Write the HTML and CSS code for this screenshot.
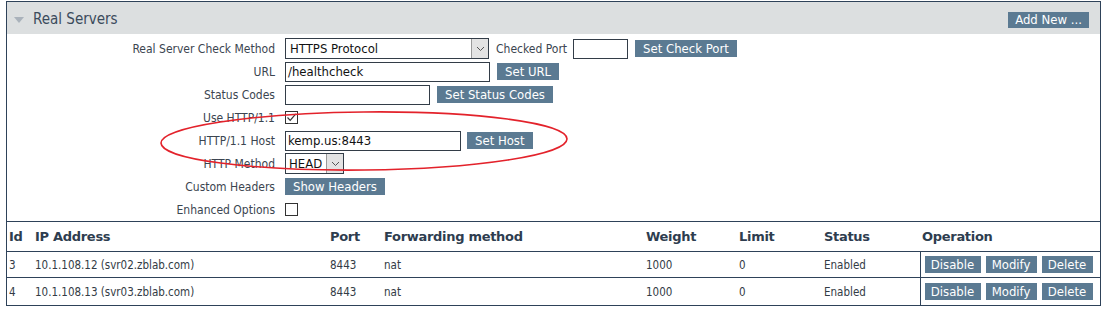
FILE: index.html
```html
<!DOCTYPE html>
<html>
<head>
<meta charset="utf-8">
<link rel="stylesheet" href="styles.css">
</head>
<body>
<div class="panel">
  <div class="panel-head">
    <div class="title"><span class="tri"></span>Real Servers</div>
    <span class="btn">Add New ...</span>
  </div>
  <div class="form">
    <div class="row">
      <div class="lbl">Real Server Check Method</div>
      <div class="ctl">
        <div class="select w-method"><span class="sel-text">HTTPS Protocol</span><span class="arrow"><svg width="9" height="6" viewBox="0 0 9 6"><path d="M1 1 L4.5 4.5 L8 1" fill="none" stroke="#555" stroke-width="1"/></svg></span></div>
        <span class="inline-lbl">Checked Port</span>
        <span class="input w-port"></span>
        <span class="btn">Set Check Port</span>
      </div>
    </div>
    <div class="row">
      <div class="lbl">URL</div>
      <div class="ctl">
        <span class="input w-url">/healthcheck</span>
        <span class="btn">Set URL</span>
      </div>
    </div>
    <div class="row">
      <div class="lbl">Status Codes</div>
      <div class="ctl">
        <span class="input w-codes"></span>
        <span class="btn">Set Status Codes</span>
      </div>
    </div>
    <div class="row">
      <div class="lbl">Use HTTP/1.1</div>
      <div class="ctl">
        <span class="check"><svg width="11" height="11" viewBox="0 0 11 11"><path d="M1.5 5.5 L4.2 8.3 L9.8 1.8" fill="none" stroke="#333" stroke-width="1.2"/></svg></span>
      </div>
    </div>
    <div class="row">
      <div class="lbl">HTTP/1.1 Host</div>
      <div class="ctl">
        <span class="input w-host">kemp.us:8443</span>
        <span class="btn">Set Host</span>
      </div>
    </div>
    <div class="row">
      <div class="lbl">HTTP Method</div>
      <div class="ctl">
        <div class="select w-http"><span class="sel-text">HEAD</span><span class="arrow"><svg width="9" height="6" viewBox="0 0 9 6"><path d="M1 1 L4.5 4.5 L8 1" fill="none" stroke="#555" stroke-width="1"/></svg></span></div>
      </div>
    </div>
    <div class="row">
      <div class="lbl">Custom Headers</div>
      <div class="ctl">
        <span class="btn">Show Headers</span>
      </div>
    </div>
    <div class="row">
      <div class="lbl">Enhanced Options</div>
      <div class="ctl">
        <span class="check"></span>
      </div>
    </div>
    <svg class="ellipse" width="420" height="70" viewBox="0 0 420 70"><ellipse cx="210" cy="35" rx="203" ry="29" fill="none" stroke="#e3222b" stroke-width="1.6" transform="rotate(-0.6 210 35)"/></svg>
  </div>
  <table class="servers">
    <thead>
      <tr>
        <th class="c-id">Id</th>
        <th class="c-ip">IP Address</th>
        <th class="c-port">Port</th>
        <th class="c-fwd">Forwarding method</th>
        <th class="c-wt">Weight</th>
        <th class="c-lim">Limit</th>
        <th class="c-st">Status</th>
        <th class="c-op">Operation</th>
      </tr>
    </thead>
    <tbody>
      <tr>
        <td>3</td>
        <td>10.1.108.12 (svr02.zblab.com)</td>
        <td>8443</td>
        <td>nat</td>
        <td>1000</td>
        <td>0</td>
        <td>Enabled</td>
        <td class="ops"><span class="btn">Disable</span><span class="btn">Modify</span><span class="btn">Delete</span></td>
      </tr>
      <tr>
        <td>4</td>
        <td>10.1.108.13 (svr03.zblab.com)</td>
        <td>8443</td>
        <td>nat</td>
        <td>1000</td>
        <td>0</td>
        <td>Enabled</td>
        <td class="ops"><span class="btn">Disable</span><span class="btn">Modify</span><span class="btn">Delete</span></td>
      </tr>
    </tbody>
  </table>
</div>
</body>
</html>
```
FILE: styles.css
```css
html, body {
  margin: 0;
  padding: 0;
  background: #ffffff;
}
body {
  font-family: "DejaVu Sans Condensed", "DejaVu Sans", sans-serif;
  font-size: 12px;
  color: #333b45;
}
.panel {
  margin: 1px 0 0 6px;
  width: 1093px;
  border: 1px solid #2e4259;
  background: #fff;
}
.panel-head {
  height: 32px;
  background: #dcdfe0;
  display: flex;
  align-items: center;
  justify-content: space-between;
  padding: 0 11px 0 5px;
}
.title {
  display: flex;
  align-items: center;
  font-size: 15px;
  color: #3b4b5c;
  margin-top: 2px;
}
.tri {
  width: 0;
  height: 0;
  border-left: 5px solid transparent;
  border-right: 5px solid transparent;
  border-top: 6px solid #aab2bb;
  margin: 1px 9px 0 2px;
}
.panel-head .btn {
  margin-top: 3px;
  height: 16px;
  padding: 0 8px;
  width: 81px;
}
.btn {
  display: inline-flex;
  align-items: center;
  justify-content: center;
  background: #5b7a92;
  color: #ffffff;
  font-size: 13px;
  height: 17px;
  padding: 0 8px;
  box-sizing: border-box;
  white-space: nowrap;
}
.form {
  position: relative;
  padding-top: 3px;
  border-bottom: 1px solid #2e4259;
}
.row {
  display: flex;
  align-items: center;
  height: 23px;
}
.lbl {
  width: 268px;
  text-align: right;
  flex: none;
  padding-right: 10px;
  color: #3b4550;
}
.ctl {
  display: flex;
  align-items: center;
}
.input {
  display: inline-flex;
  align-items: center;
  height: 20px;
  box-sizing: border-box;
  border: 1px solid #333d48;
  padding: 0 2px;
  font-size: 13px;
  color: #111;
  background: #fff;
}
.w-url { width: 205px; margin-right: 7px; }
.w-codes { width: 145px; margin-right: 7px; }
.w-host { width: 176px; margin-right: 6px; }
.w-port { width: 55px; margin-right: 7px; }
.select {
  display: inline-flex;
  align-items: stretch;
  height: 21px;
  box-sizing: border-box;
  border: 1px solid #333d48;
  font-size: 13px;
  color: #111;
  background: #fff;
}
.sel-text {
  flex: 1;
  display: flex;
  align-items: center;
  padding-left: 4px;
}
.arrow {
  width: 16px;
  background: #e3e3e3;
  border-left: 1px solid #9a9a9a;
  display: flex;
  align-items: center;
  justify-content: center;
}
.w-method { width: 204px; }
.w-http { width: 59px; }
.w-http .sel-text { padding-left: 3px; }
.inline-lbl {
  margin: 0 6px 0 7px;
  color: #3b4550;
}
.check {
  display: inline-flex;
  align-items: center;
  justify-content: center;
  width: 13px;
  height: 13px;
  box-sizing: border-box;
  border: 1px solid #333;
  background: #fff;
  margin-top: -1px;
}
.ellipse {
  position: absolute;
  left: 147px;
  top: 72px;
}
.servers {
  width: 100%;
  border-collapse: collapse;
  table-layout: fixed;
}
.servers th {
  text-align: left;
  font-family: "DejaVu Sans", sans-serif;
  font-weight: bold;
  font-size: 13px;
  color: #2e3d4f;
  height: 29px;
  padding: 0 0 0 2px;
  border-bottom: 1px solid #2e4259;
  letter-spacing: -0.3px;
}
.servers td {
  height: 25px;
  padding: 0 0 0 2px;
  border-bottom: 1px solid #2e4259;
  color: #333b45;
  font-size: 11.5px;
  white-space: nowrap;
}
.servers tbody tr:last-child td {
  border-bottom: none;
  height: 27px;
}
.c-id { width: 24px; }
.c-ip { width: 293px; }
.c-port { width: 52px; }
.c-fwd { width: 260px; }
.c-wt { width: 91px; }
.c-lim { width: 83px; }
.c-st { width: 96px; }
.servers td.ops {
  border-left: 1px solid #2e4259;
  padding-left: 4px;
}
.ops .btn {
  margin-right: 5px;
}
.ops .btn:nth-child(1) { width: 56px; }
.ops .btn:nth-child(2) { width: 51px; }
.ops .btn:nth-child(3) { width: 51px; margin-right: 0; }
```
